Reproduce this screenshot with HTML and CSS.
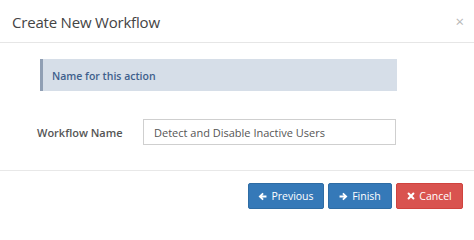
FILE: index.html
```html
<!DOCTYPE html>
<html>
<head>
<meta charset="utf-8">
<link rel="stylesheet" href="styles.css">
</head>
<body>
<div class="modal">
  <div class="modal-header">
    <h4 class="modal-title">Create New Workflow</h4>
    <span class="close">&times;</span>
  </div>
  <div class="modal-body">
    <div class="alert">Name for this action</div>
    <div class="form-row">
      <label class="label">Workflow Name</label>
      <div class="input">Detect and Disable Inactive Users</div>
    </div>
  </div>
  <div class="modal-footer">
    <button class="btn btn-primary btn-prev"><svg class="ico" viewBox="0 0 10 10"><path d="M0.6 5 L5 0.9 L6.4 2.3 L4.5 4 H9.4 V6 H4.5 L6.4 7.7 L5 9.1 Z" fill="#fff"/></svg>Previous</button>
    <button class="btn btn-primary btn-fin"><svg class="ico" viewBox="0 0 10 10"><path d="M9.4 5 L5 0.9 L3.6 2.3 L5.5 4 H0.6 V6 H5.5 L3.6 7.7 L5 9.1 Z" fill="#fff"/></svg>Finish</button>
    <button class="btn btn-danger btn-cancel"><svg class="ico ico-x" viewBox="0 0 10 10"><path d="M2 2 L8 8 M8 2 L2 8" stroke="#fff" stroke-width="2.6" stroke-linecap="round"/></svg>Cancel</button>
  </div>
</div>
</body>
</html>
```
FILE: styles.css
```css
html, body {
  margin: 0;
  padding: 0;
  background: #ffffff;
}
body {
  font-family: "Open Sans", "Noto Sans", sans-serif;
  color: #555;
}
.modal {
  width: 474px;
  height: 222px;
  background: #fff;
}
.modal-header {
  height: 43px;
  box-sizing: border-box;
  padding: 2px 10px 0 12px;
  display: flex;
  align-items: center;
  justify-content: space-between;
  border-bottom: 1px solid #e6e6e6;
}
.modal-title {
  margin: 0;
  font-size: 15px;
  font-weight: 400;
  color: #444;
  letter-spacing: -0.2px;
}
.close {
  font-size: 15px;
  color: #b8b8b8;
  line-height: 1;
  margin-top: -2px;
}
.modal-body {
  padding: 16px 0 0 40px;
  box-sizing: border-box;
  border-bottom: 1px solid #e8e8e8;
  height: 128px;
}
.alert {
  width: 357px;
  height: 32px;
  box-sizing: border-box;
  background: #d6dee8;
  border-left: 3px solid #909fb4;
  padding-left: 9px;
  padding-top: 1px;
  display: flex;
  align-items: center;
  font-size: 10.5px;
  font-weight: 600;
  color: #3e5f8c;
}
.form-row {
  display: flex;
  align-items: center;
  margin-top: 28px;
  margin-left: -3px;
}
.label {
  width: 106px;
  font-size: 11px;
  font-weight: 600;
  color: #555;
}
.input {
  width: 253px;
  height: 26px;
  box-sizing: border-box;
  border: 1px solid #cfcfcf;
  padding-left: 10px;
  display: flex;
  align-items: center;
  font-size: 11px;
  color: #555;
}
.modal-footer {
  display: flex;
  justify-content: flex-end;
  gap: 4px;
  padding: 12px 11px 0 0;
}
.btn {
  height: 26px;
  box-sizing: border-box;
  border: 1px solid;
  border-radius: 2px;
  display: flex;
  align-items: center;
  justify-content: center;
  font-family: "Open Sans", "Noto Sans", sans-serif;
  font-size: 10.5px;
  color: #fff;
  padding: 0;
}
.btn-primary {
  background: #3579b8;
  border-color: #2e6ca4;
}
.btn-danger {
  background: #d9534f;
  border-color: #d0433e;
}
.btn-prev { width: 76px; }
.btn-fin { width: 64px; }
.btn-cancel { width: 67px; }
.ico {
  width: 9px;
  height: 9px;
  margin-right: 4px;
}
.ico-x {
  width: 8px;
  height: 8px;
}
```
